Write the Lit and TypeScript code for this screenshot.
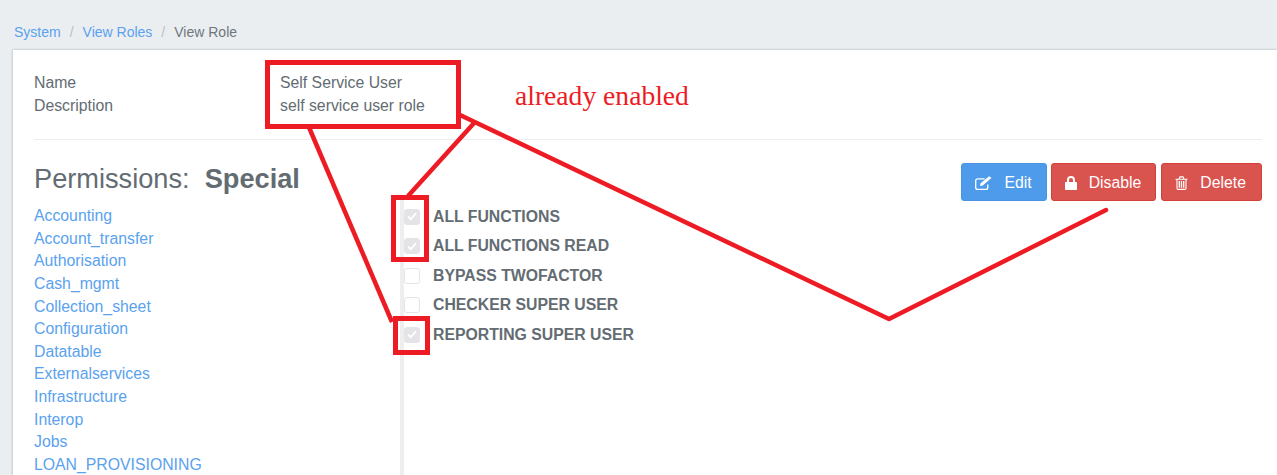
import { LitElement, html, css, svg } from "lit";
import { customElement } from "lit/decorators.js";

const groups = ["Accounting","Account_transfer","Authorisation","Cash_mgmt","Collection_sheet","Configuration","Datatable","Externalservices","Infrastructure","Interop","Jobs","LOAN_PROVISIONING"];
const perms: [string, boolean][] = [["ALL FUNCTIONS",true],["ALL FUNCTIONS READ",true],["BYPASS TWOFACTOR",false],["CHECKER SUPER USER",false],["REPORTING SUPER USER",true]];

@customElement("app-root")
export class AppRoot extends LitElement {
  static styles = css`
    :host { display:block; width:1277px; height:475px; overflow:hidden; position:relative; background:#ebeef1; font-family:"Liberation Sans",Arial,sans-serif; font-size:15.8px; color:#636c72; }
    a { color:#5aa2ee; text-decoration:none; }
    .crumbs { display:flex; height:50px; box-sizing:border-box; padding:23px 0 0 14px; line-height:18px; font-size:14px; }
    .sep { color:#b9bfc4; padding:0 9px; }
    .crumbs .cur { color:#6f777d; }
    .card { margin-left:13px; height:425px; background:#fff; box-shadow:-1px 0 2px #c9ccd0, 0 -1px 2px #d5d8db; box-sizing:border-box; padding:21px 0 0 21px; overflow:hidden; }
    .info { display:grid; grid-template-columns:246px 1fr; line-height:23px; margin-right:15px; padding-bottom:22px; border-bottom:1px solid #eceeef; }
    .body { display:flex; }
    .left { width:366px; flex:none; }
    h2 { margin:21px 0 0; font-weight:400; font-size:27.2px; line-height:36px; color:#636c72; white-space:pre; }
    h2 b { font-weight:700; }
    .groups { margin-top:8px; display:flex; flex-direction:column; }
    .groups a { line-height:22.64px; height:22.64px; }
    .right { flex:1; margin-top:55px; border-left:4px solid #eeeeee; position:relative; padding-top:7px; }
    .perm { display:flex; align-items:center; height:29.5px; font-weight:700; color:#636c72; }
    .cb { width:14px; height:14px; border:1px solid #e3e3e8; border-radius:3px; margin-right:13px; flex:none; display:flex; align-items:center; justify-content:center; }
    .cb.on { background:#e3e3e8; }
    .actions { position:absolute; top:-32px; right:15px; display:flex; gap:4px; }
    .btn { display:flex; align-items:center; height:38px; box-sizing:border-box; border-radius:3px; color:#fff; padding:1px 14px 0 13px; gap:12px; }
    .btn + .btn + .btn { margin-left:1px; padding-right:15px; }
    .blue { background:#4e9bec; border:1px solid #4a94e3; }
    .red { background:#d9534f; border:1px solid #d43f3a; }
    .overlay { position:absolute; left:0; top:0; pointer-events:none; }
    .note { position:absolute; left:515px; top:81px; font-family:"Liberation Serif",serif; font-size:27.6px; line-height:30px; color:#ed1c24; }
  `;
  render() {
    return html`
      <nav class="crumbs"><a href="#">System</a><span class="sep">/</span><a href="#">View Roles</a><span class="sep">/</span><span class="cur">View Role</span></nav>
      <section class="card">
        <div class="info"><span>Name</span><span>Self Service User</span><span>Description</span><span>self service user role</span></div>
        <div class="body">
          <div class="left">
            <h2>Permissions:  <b>Special</b></h2>
            <div class="groups">${groups.map(g => html`<a href="#">${g}</a>`)}</div>
          </div>
          <div class="right">
            <div class="actions">
              <a class="btn blue"><svg width="17" height="14" viewBox="0 0 17 14" fill="none" stroke="#fff" stroke-width="1.3"><path d="M12.800 8.500v2.900a1.900 1.900 0 0 1-1.900 1.900H2.600A1.900 1.900 0 0 1 .7 11.400V4.700a1.900 1.900 0 0 1 1.900-1.900h7"/><path d="M5.500 7.300 5 10l2.700-.5L16.500 2 14.200.2z" fill="#fff" stroke="none"/></svg>Edit</a>
              <a class="btn red"><svg width="12" height="14" viewBox="0 0 12 14"><path fill="#fff" d="M2 6V4a4 4 0 0 1 8 0v2h1.200c.5 0 .8.300.8.800v6.400c0 .5-.3.800-.8.800H.8c-.5 0-.8-.3-.8-.8V6.800c0-.5.300-.8.800-.8zm2 0h4V4a2 2 0 0 0-4 0z"/></svg>Disable</a>
              <a class="btn red"><svg width="13" height="14" viewBox="0 0 13 14" fill="none" stroke="#fff" stroke-width="1.100"><path d="M.5 3.300h12M4 3.300l.9-2.400h3.200L9 3.300M2 3.300v9c0 .7.400 1.100 1 1.100h7c.6 0 1-.4 1-1.100v-9"/><path d="M4.300 5v6.800M6.500 5v6.800M8.700 5v6.800" stroke-width="1.300"/></svg>Delete</a>
            </div>
            ${perms.map(([p,on]) => html`<div class="perm"><span class="cb ${on?'on':''}">${on?svg`<svg width="10" height="9" viewBox="0 0 10 9"><path d="M1 4.500 3.800 7.200 9 1.200" fill="none" stroke="#fff" stroke-width="1.800"/></svg>`:''}</span>${p}</div>`)}
          </div>
        </div>
      </section>
      <svg class="overlay" width="1277" height="475" fill="none" stroke="#ed1c24" stroke-width="4.500">
        <path d="M460 115 889 319 1106 210" stroke-linejoin="round" stroke-linecap="round"/>
        <path d="M475 122 408 196"/>
        <path d="M308 125 392 322"/>
        <g stroke-width="5"><rect x="267.500" y="62.500" width="191" height="64"/><rect x="393.500" y="197.500" width="33" height="62"/><rect x="395.500" y="318.500" width="32" height="34"/></g>
      </svg>
      <div class="note">already enabled</div>
    `;
  }
}
